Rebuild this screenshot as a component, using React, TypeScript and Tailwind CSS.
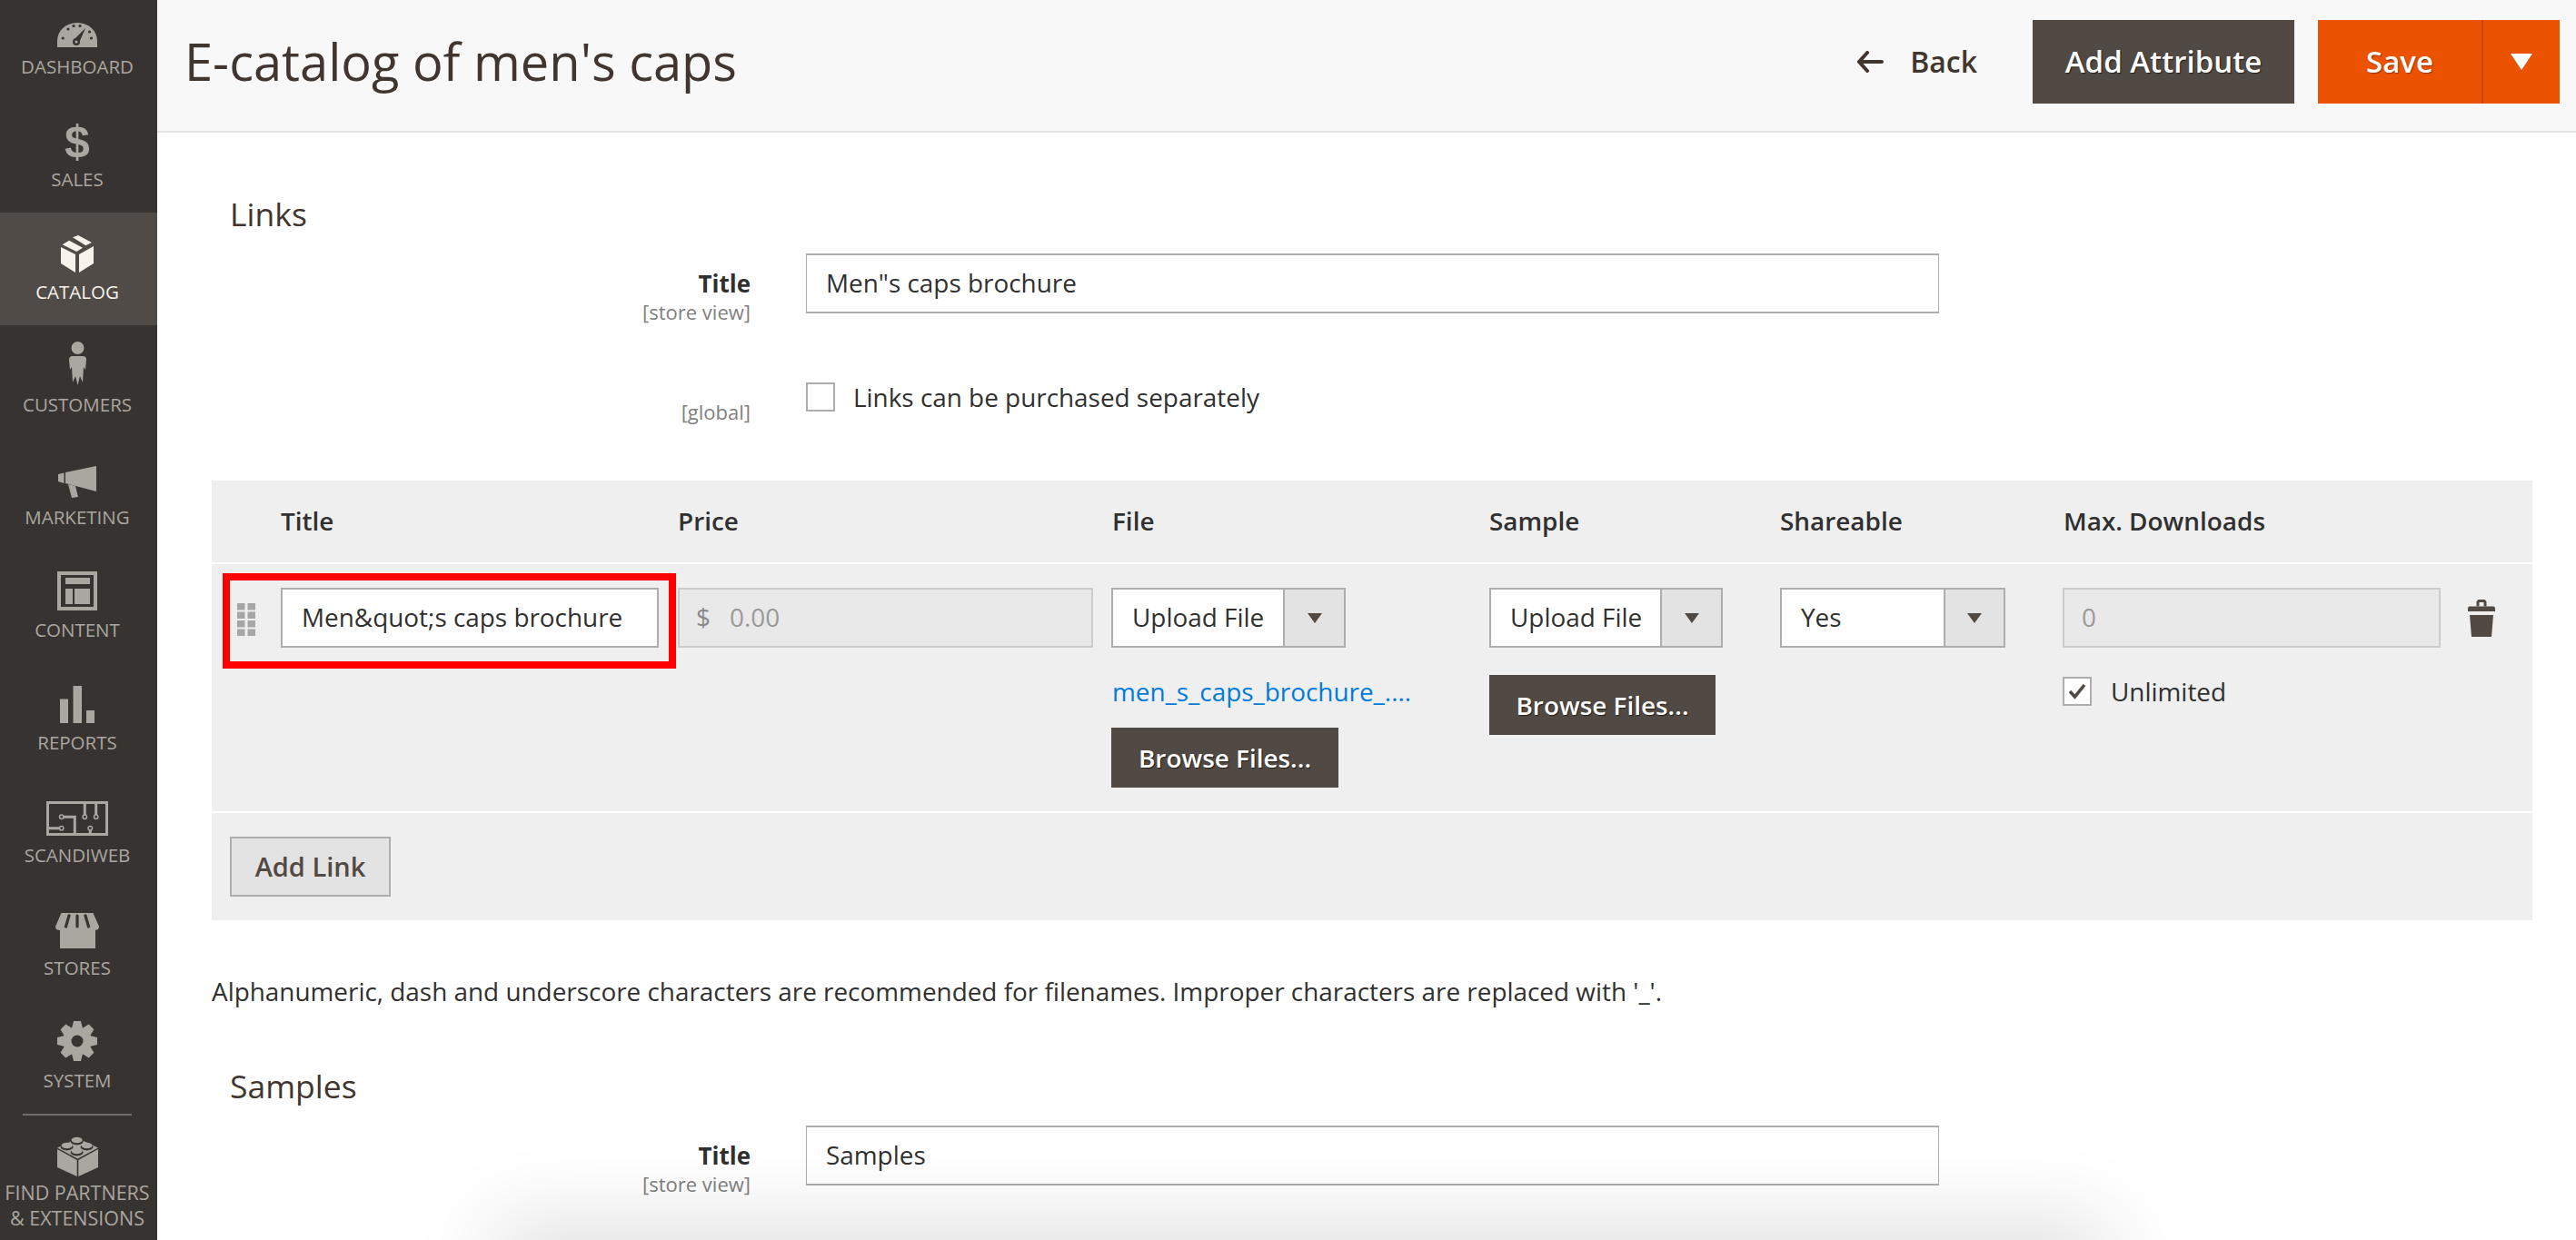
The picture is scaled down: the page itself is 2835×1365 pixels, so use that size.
import type { ReactNode } from 'react';

const ICON = '#aaa6a0';
const DARK = '#373330';

function DashboardIcon() {
  return (
    <svg width="44" height="27" viewBox="0 0 44 27">
      <path d="M0 27V20A22 20 0 0 1 44 20V27Z" fill={ICON} />
      {[[6.3, 17], [12, 7], [18, 3.5], [25, 3.5], [35.5, 10], [37.5, 17]].map(([x, y]) => (
        <circle key={x} cx={x} cy={y} r="1.6" fill={DARK} />
      ))}
      <path d="M31 6L24 22L18 19Z" fill={DARK} />
      <circle cx="21" cy="21" r="4" fill={DARK} />
      <circle cx="21" cy="21" r="1.6" fill={ICON} />
    </svg>
  );
}

function CatalogIcon() {
  const c = '#f7f3eb';
  return (
    <svg width="36" height="41" viewBox="0 0 36 41" fill={c}>
      <polygon points="13,2.3 19,0 34,8 27.3,11.3" />
      <polygon points="1.7,10.3 9,5.7 24,13.7 17.3,18" />
      <polygon points="0,13 16,21 16,41 0,31" />
      <polygon points="20,21 36,12 36,31 20,41" />
    </svg>
  );
}

function CustomersIcon() {
  return (
    <svg width="21" height="48" viewBox="0 0 21 48" fill={ICON}>
      <circle cx="10.5" cy="7" r="7" />
      <path d="M1 20Q1 16 5 16H16Q20 16 20 20L19 31L17 28L16 45L13 38L10.5 48L8 38L5 45L4 28L2 31Z" />
    </svg>
  );
}

function MarketingIcon() {
  return (
    <svg width="42" height="35" viewBox="0 0 42 35" fill={ICON}>
      <polygon points="0,9 6.5,7.5 6.5,19 0,17" />
      <polygon points="8,7 42,0 42,28 8,19" />
      <polygon points="11,20 15,35 22,34 19,22" />
    </svg>
  );
}

function ContentIcon() {
  return (
    <svg width="44" height="43" viewBox="0 0 44 43" fill={ICON}>
      <path fillRule="evenodd" d="M0 0H44V43H0ZM4 4V39H40V4Z" />
      <rect x="9" y="7" width="27" height="7" />
      <rect x="9" y="19" width="8" height="17" />
      <rect x="19" y="19" width="17" height="17" />
    </svg>
  );
}

function ReportsIcon() {
  return (
    <svg width="38" height="41" viewBox="0 0 38 41" fill={ICON}>
      <rect x="0" y="14.5" width="9" height="26.5" />
      <rect x="14.5" y="0" width="9.5" height="41" />
      <rect x="29" y="27" width="9" height="14" />
    </svg>
  );
}

function ScandiwebIcon() {
  return (
    <svg width="68" height="38" viewBox="0 0 68 38" fill="none" stroke={ICON} strokeWidth="3">
      <rect x="1.5" y="1.5" width="65" height="35" />
      <path d="M31.3 36V17.3H19M1 29.7H14.4M42.3 1V15M54.7 1V15M48.3 37V32" />
      {[[16.7, 17.3], [16.7, 29.7], [42.3, 17.3], [54.7, 17.3], [48.3, 29.7]].map(([x, y]) => (
        <circle key={`${x}-${y}`} cx={x} cy={y} r="2.2" strokeWidth="1.5" />
      ))}
    </svg>
  );
}

function StoresIcon() {
  return (
    <svg width="48" height="39" viewBox="0 0 48 39" fill={ICON}>
      <rect x="5" y="16" width="39" height="23" />
      <path d="M6.5 0H41.5L48 15Q48 19 43 19Q38 19 36 16Q34 19 30 19Q26 19 24 16Q22 19 18 19Q14 19 12 16Q10 19 5 19Q0 19 0 15Z" />
      <path d="M15 3L11.5 15M24 3V15M33 3L36.5 15" stroke={DARK} strokeWidth="3.2" strokeLinecap="round" fill="none" />
    </svg>
  );
}

function SystemIcon() {
  return (
    <svg width="44" height="44" viewBox="-22 -22 44 44" fill={ICON}>
      {[0, 45, 90, 135, 180, 225, 270, 315].map((a) => (
        <polygon key={a} points="-4,-22 4,-22 6.5,-12 -6.5,-12" transform={`rotate(${a})`} />
      ))}
      <circle r="15.5" />
      <circle r="6.5" fill={DARK} />
    </svg>
  );
}

function PartnersIcon() {
  const studs = [[21.6, 4], [10.6, 10], [32.6, 10], [21.6, 16]];
  return (
    <svg width="45" height="44" viewBox="0 0 45 44" fill={ICON}>
      <polygon points="0,14 21.7,26 21.7,44 0,34" />
      <polygon points="23.3,26 45,14 45,34 23.3,44" />
      <polygon points="22.5,2 45,12.5 22.5,24.5 0,12.5" />
      {studs.map(([x, y]) => (
        <g key={`${x}-${y}`}>
          <ellipse cx={x} cy={y + 1.6} rx="7" ry="3.8" fill={DARK} />
          <ellipse cx={x} cy={y} rx="6" ry="3.2" />
        </g>
      ))}
    </svg>
  );
}

function DollarIcon() {
  return <span className="flex h-[41px] items-center font-['Liberation_Sans',sans-serif] text-[50px] font-bold leading-none">$</span>;
}

const navItems: { label: string; icon: ReactNode; active?: boolean }[] = [
  { label: 'Dashboard', icon: <DashboardIcon /> },
  { label: 'Sales', icon: <DollarIcon /> },
  { label: 'Catalog', icon: <CatalogIcon />, active: true },
  { label: 'Customers', icon: <CustomersIcon /> },
  { label: 'Marketing', icon: <MarketingIcon /> },
  { label: 'Content', icon: <ContentIcon /> },
  { label: 'Reports', icon: <ReportsIcon /> },
  { label: 'Scandiweb', icon: <ScandiwebIcon /> },
  { label: 'Stores', icon: <StoresIcon /> },
  { label: 'System', icon: <SystemIcon /> },
];

function Sidebar() {
  return (
    <aside className="w-[173px] shrink-0 overflow-hidden bg-[#373330] text-[#aaa6a0]">
      <nav className="-mt-[14px]">
        {navItems.map((item) => (
          <div
            key={item.label}
            className={`flex h-[124px] flex-col items-center pr-[3px] ${item.active ? 'bg-[#514b47] text-[#f7f3eb]' : ''}`}
          >
            <div className="flex h-[66px] items-end justify-center">{item.icon}</div>
            <span className="mt-[11px] text-[20.5px] uppercase leading-[20px]">{item.label}</span>
          </div>
        ))}
      </nav>
      <div className="ml-[25px] h-[2px] w-[120px] bg-[#736963]" />
      <div className="flex flex-col items-center pr-[3px]">
        <div className="flex h-[67px] items-end justify-center">
          <PartnersIcon />
        </div>
        <span className="mt-[4px] whitespace-nowrap text-center text-[21.5px] uppercase leading-[28px]">
          Find Partners
          <br />
          &amp; Extensions
        </span>
      </div>
    </aside>
  );
}

function Caret({ className = 'h-[11px] w-[16px]', fill = '#514943' }: { className?: string; fill?: string }) {
  return (
    <svg className={className} viewBox="0 0 16 11" preserveAspectRatio="none">
      <polygon points="0,0 16,0 8,11" fill={fill} />
    </svg>
  );
}

function DarkButton({ children, className = '' }: { children: ReactNode; className?: string }) {
  return (
    <div
      className={`flex items-center justify-center bg-[#514943] font-semibold text-white [text-shadow:1px_1px_1px_rgba(0,0,0,0.6)] ${className}`}
    >
      {children}
    </div>
  );
}

function Header() {
  return (
    <header className="flex h-[146px] shrink-0 items-center justify-between border-b-2 border-[#e3e3e3] bg-[#f8f8f8] pb-[8px] pl-[30px] pr-[18px]">
      <h1 className="pb-[3px] text-[56px] leading-none text-[#41362f]">E-catalog of men's caps</h1>
      <div className="flex items-center">
        <div className="mr-[61px] flex items-center gap-[29px] text-[#41362f]">
          <svg width="29" height="24" viewBox="0 0 29 24" fill="none" stroke="currentColor" strokeWidth="4" strokeLinecap="round">
            <path d="M11 2L2 12L11 22M3 12H27" />
          </svg>
          <span className="text-[32px] font-semibold leading-none">Back</span>
        </div>
        <DarkButton className="h-[92px] w-[288px] text-[33px]">Add Attribute</DarkButton>
        <div className="ml-[26px] flex h-[92px] w-[266px] bg-[#eb5202] text-white">
          <div className="flex w-[182px] items-center justify-center border-r-2 border-[#c64502] text-[33px] font-semibold [text-shadow:1px_1px_1px_rgba(0,0,0,0.4)]">
            Save
          </div>
          <div className="flex flex-1 items-center justify-center">
            <Caret className="h-[18px] w-[24px]" fill="#ffffff" />
          </div>
        </div>
      </div>
    </header>
  );
}

function TextField({ value }: { value: string }) {
  return (
    <div className="flex h-[66px] w-[1247px] items-center border border-y-2 border-[#adadad] bg-white pb-[2px] pl-[21px] text-[#303030]">
      {value}
    </div>
  );
}

function FieldRow({ label, scope, children }: { label?: string; scope: string; children: ReactNode }) {
  return (
    <div className="flex gap-[61px]">
      <div className={`w-[593px] text-right ${label ? 'pt-[18px]' : 'pt-[21px]'}`}>
        {label && <div className="text-[26px] font-bold leading-[30px] text-[#303030]">{label}</div>}
        <div className={`text-[22px] leading-[22px] text-[#808080] ${label ? 'mt-[5px]' : ''}`}>{scope}</div>
      </div>
      {children}
    </div>
  );
}

function Select({ value, className, dropClass }: { value: string; className: string; dropClass: string }) {
  return (
    <div className={`flex h-[66px] border-2 border-[#adadad] bg-white text-[#303030] ${className}`}>
      <div className="flex flex-1 items-center pb-[2px] pl-[21px]">{value}</div>
      <div className={`flex items-center justify-center border-l-2 border-[#adadad] bg-[#e3e3e3] ${dropClass}`}>
        <Caret />
      </div>
    </div>
  );
}

function DragHandle() {
  return (
    <svg width="20" height="36" viewBox="0 0 20 36" fill="#a6a6a6">
      {[0, 9.5, 19, 28.5].flatMap((y) =>
        [0, 11.5].map((x) => <rect key={`${x}-${y}`} x={x} y={y} width="8.5" height="7.5" />),
      )}
    </svg>
  );
}

function LinksTable() {
  const columns = 'grid grid-cols-[76px_437px_478px_415px_320px_312px_1fr]';
  const heads = ['', 'Title', 'Price', 'File', 'Sample', 'Shareable', 'Max. Downloads'];
  return (
    <div className="mt-[65px] flex flex-col gap-[2px]">
      <div className={`${columns} h-[90px] items-center bg-[#efefef] pb-[3px] font-semibold text-[#303030]`}>
        {heads.map((h) => (
          <div key={h}>{h}</div>
        ))}
      </div>
      <div className={`${columns} relative h-[272px] bg-[#efefef] pt-[26px] text-[#303030]`}>
        <div className="pl-[28px] pt-[17px]">
          <DragHandle />
        </div>
        <div className="flex h-[66px] w-[416px] items-center border-2 border-[#adadad] bg-white pb-[2px] pl-[21px]">
          Men&amp;quot;s caps brochure
        </div>
        <div className="flex h-[66px] w-[457px] items-center border-2 border-[#cccccc] bg-[#e9e9e9] pb-[2px] pl-[18px] text-[#999999]">
          <span className="w-[37px] text-[#8a8a8a]">$</span>0.00
        </div>
        <div>
          <Select value="Upload File" className="-ml-[1px] w-[258px]" dropClass="w-[67px]" />
          <div className="mt-[30px] w-[330px] text-[#007bdb]">men_s_caps_brochure_....</div>
          <DarkButton className="-ml-[1px] mt-[22px] h-[66px] w-[250px]">Browse Files...</DarkButton>
        </div>
        <div>
          <Select value="Upload File" className="w-[257px]" dropClass="w-[67px]" />
          <DarkButton className="mt-[30px] h-[66px] w-[249px]">Browse Files...</DarkButton>
        </div>
        <div>
          <Select value="Yes" className="w-[248px]" dropClass="w-[66px]" />
        </div>
        <div className="flex items-start gap-[30px]">
          <div>
            <div className="-ml-[1px] flex h-[66px] w-[416px] items-center border-2 border-[#cccccc] bg-[#e9e9e9] pb-[2px] pl-[19px] text-[#999999]">
              0
            </div>
            <label className="-ml-[1px] mt-[30px] flex items-center gap-[21px]">
              <span className="flex h-[32px] w-[32px] items-center justify-center border-2 border-[#adadad] bg-white">
                <svg width="20" height="18" viewBox="0 0 20 18" fill="none" stroke="#514943" strokeWidth="3.5">
                  <path d="M2 9L7.5 15L18 2" />
                </svg>
              </span>
              Unlimited
            </label>
          </div>
          <svg className="mt-[13px]" width="30" height="41" viewBox="0 0 30 41" fill="#514943">
            <path fillRule="evenodd" d="M9.5 7.5V2L11.5 0H18.5L20.5 2V7.5ZM12.5 3V7.5H17.5V3Z" />
            <path d="M2 7.5H28Q30 7.5 30 9.5V13H0V9.5Q0 7.5 2 7.5Z" />
            <polygon points="2,17 28,17 26,41 4,41" />
          </svg>
        </div>
        {/* annotation marker drawn over the row */}
        <div className="pointer-events-none absolute left-[12px] top-[10px] h-[105px] w-[499px] border-[8px] border-[#ff0000]" />
      </div>
      <div className="h-[118px] bg-[#efefef] pl-[20px] pt-[26px]">
        <div className="flex h-[66px] w-[177px] items-center justify-center border-2 border-[#adadad] bg-[#e3e3e3] text-[29px] font-semibold text-[#514943]">
          Add Link
        </div>
      </div>
    </div>
  );
}

export default function App() {
  return (
    <div className="relative flex h-[1365px] w-full overflow-hidden bg-white font-['Open_Sans',sans-serif] text-[27.9px] leading-[36px]">
      <Sidebar />
      <main className="flex min-w-0 flex-1 flex-col">
        <Header />
        <div className="pl-[60px] pr-[48px]">
          <h2 className="ml-[20px] mt-[69px] text-[35.5px] leading-[40px] text-[#41362f]">Links</h2>
          <div className="mt-[24px]">
            <FieldRow label="Title" scope="[store view]">
              <TextField value={'Men"s caps brochure'} />
            </FieldRow>
          </div>
          <div className="mt-[67px]">
            <FieldRow scope="[global]">
              <label className="flex items-start gap-[20px] text-[#303030]">
                <span className="h-[32px] w-[32px] border-2 border-[#adadad] bg-white" />
                <span className="-mt-[2px]">Links can be purchased separately</span>
              </label>
            </FieldRow>
          </div>
          <LinksTable />
          <p className="mt-[60px] pb-[1px] text-[#303030]">
            Alphanumeric, dash and underscore characters are recommended for filenames. Improper characters are replaced with '_'.
          </p>
          <h2 className="ml-[20px] mt-[65px] text-[35.5px] leading-[40px] text-[#41362f]">Samples</h2>
          <div className="mt-[24px]">
            <FieldRow label="Title" scope="[store view]">
              <TextField value="Samples" />
            </FieldRow>
          </div>
        </div>
      </main>
      {/* shadow of something sitting just below the fold */}
      <div className="absolute left-[568px] top-[1375px] h-[30px] w-[1730px] shadow-[0_0_96px_20px_rgba(0,0,0,0.17)]" />
    </div>
  );
}
